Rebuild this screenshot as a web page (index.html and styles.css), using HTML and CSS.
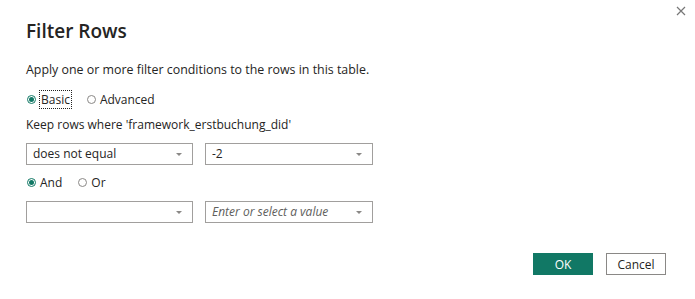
FILE: index.html
```html
<!DOCTYPE html>
<html>
  <head>
    <meta charset="utf-8">
    <title>Filter Rows</title>
    <link rel="stylesheet" href="styles.css">
  </head>
  <body>
    <div class="dialog">
      <button class="close" type="button" aria-label="Close">
        <svg width="10" height="10" viewBox="0 0 10 10"><path d="M1 1 L9 9 M9 1 L1 9" stroke="#777" stroke-width="1.2" fill="none"/></svg>
      </button>

      <h1 class="title">Filter Rows</h1>
      <p class="intro">Apply one or more filter conditions to the rows in this table.</p>

      <div class="radios">
        <label class="radio on"><span class="dot"></span><span class="focus">Basic</span></label>
        <label class="radio"><span class="dot"></span>Advanced</label>
      </div>

      <p class="keep">Keep rows where 'framework_erstbuchung_did'</p>

      <div class="row">
        <div class="combo op">does not equal<span class="caret"></span></div>
        <div class="combo val">-2<span class="caret"></span></div>
      </div>

      <div class="radios join">
        <label class="radio on"><span class="dot"></span>And</label>
        <label class="radio"><span class="dot"></span>Or</label>
      </div>

      <div class="row">
        <div class="combo op"><span class="caret"></span></div>
        <div class="combo val"><span class="hint">Enter or select a value</span><span class="caret"></span></div>
      </div>

      <div class="actions">
        <button class="btn ok" type="button">OK</button>
        <button class="btn cancel" type="button">Cancel</button>
      </div>
    </div>
  </body>
</html>
```

FILE: styles.css
```css
body {
  margin: 0;
  background: #fff;
  color: #252423;
  font-family: "Open Sans", "Noto Sans", sans-serif;
  font-size: 12px;
}
.dialog {
  position: relative;
  width: 695px;
  height: 299px;
  box-sizing: border-box;
  padding: 17px 29px 0 26px;
}
.close {
  position: absolute;
  top: 4px;
  right: 9px;
  border: none;
  background: none;
  padding: 0;
  width: 10px;
  height: 10px;
}
.title {
  margin: 0;
  font-size: 19px;
  font-weight: 600;
  line-height: 28px;
}
.intro {
  margin: 16px 0 0;
  font-size: 12.4px;
  line-height: 17px;
}
.radios {
  display: flex;
  gap: 15px;
  margin-top: 13px;
  height: 17px;
  align-items: center;
}
.radio {
  display: flex;
  align-items: center;
  gap: 4px;
}
.dot {
  width: 7px;
  height: 7px;
  border: 1.5px solid #8a8886;
  border-radius: 50%;
  box-sizing: content-box;
  position: relative;
  margin-left: 1px;
}
.radio.on .dot {
  border-color: #117865;
}
.radio.on .dot::after {
  content: "";
  position: absolute;
  left: 1px;
  top: 1px;
  width: 5px;
  height: 5px;
  border-radius: 50%;
  background: #117865;
}
.focus {
  outline: 1px dotted #222;
  padding: 0 1px;
}
.keep {
  margin: 8px 0 0;
  line-height: 17px;
}
.row {
  display: flex;
  gap: 12px;
  margin-top: 10px;
}
.combo {
  position: relative;
  height: 22px;
  border: 1px solid #a19f9d;
  box-sizing: border-box;
  padding: 0 6px;
  line-height: 20px;
}
.combo.op {
  width: 167px;
}
.combo.val {
  width: 168px;
}
.caret {
  position: absolute;
  right: 10px;
  top: 9px;
  border-left: 3px solid transparent;
  border-right: 3px solid transparent;
  border-top: 3px solid #8a8886;
}
.hint {
  font-style: italic;
  color: #605e5c;
}
.join {
  margin-top: 9px;
  gap: 15px;
}
.actions {
  display: flex;
  justify-content: flex-end;
  gap: 13px;
  margin-top: 30px;
}
.btn {
  width: 60px;
  height: 22px;
  font-family: inherit;
  font-size: 12px;
  padding: 0;
}
.ok {
  background: #117865;
  border: 1px solid #117865;
  color: #fff;
}
.cancel {
  background: #fff;
  border: 1px solid #8a8886;
  color: #252423;
}
```
